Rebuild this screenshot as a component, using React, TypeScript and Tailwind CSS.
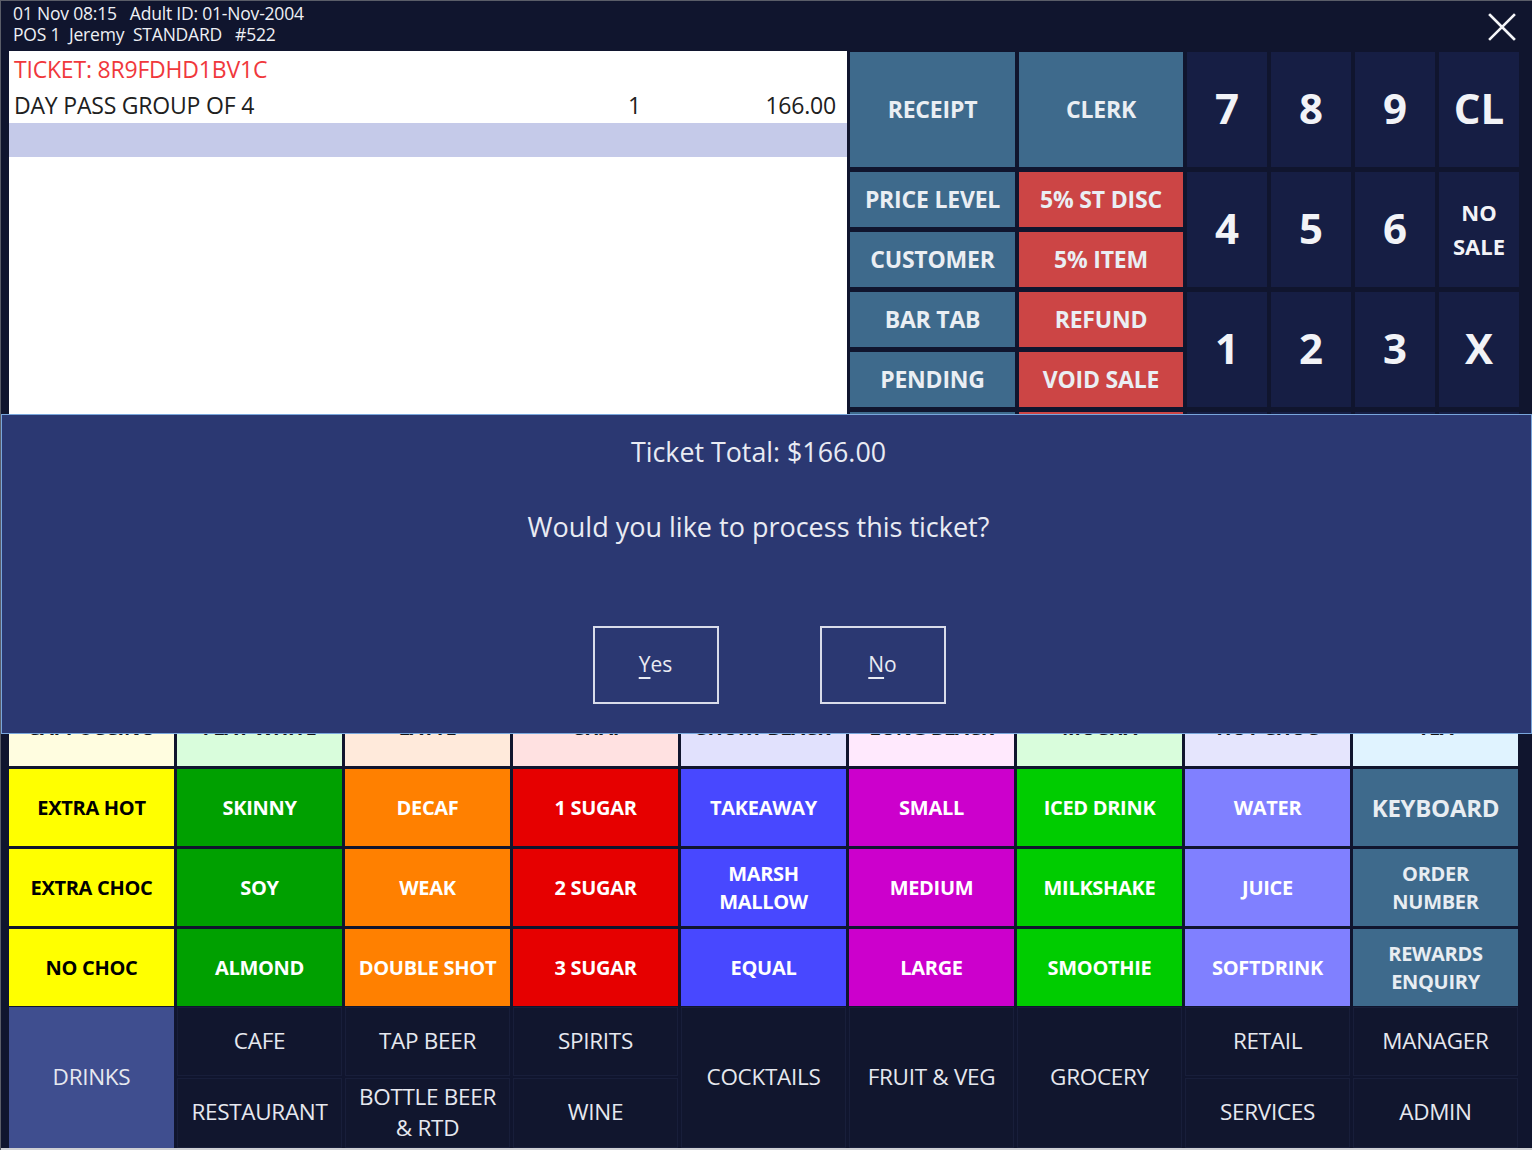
import React from 'react';

type Cell = { label: string; bg: string; fg?: string };

const font = { fontFamily: '"Open Sans", "Noto Sans", "DejaVu Sans", sans-serif' };

const sideKeys: Cell[] = [
  { label: 'PRICE LEVEL', bg: 'bg-[#3e6a8c]' },
  { label: '5% ST DISC', bg: 'bg-[#cc4545]' },
  { label: 'CUSTOMER', bg: 'bg-[#3e6a8c]' },
  { label: '5% ITEM', bg: 'bg-[#cc4545]' },
  { label: 'BAR TAB', bg: 'bg-[#3e6a8c]' },
  { label: 'REFUND', bg: 'bg-[#cc4545]' },
  { label: 'PENDING', bg: 'bg-[#3e6a8c]' },
  { label: 'VOID SALE', bg: 'bg-[#cc4545]' },
  { label: '', bg: 'bg-[#3e6a8c]' },
  { label: '', bg: 'bg-[#cc4545]' },
  { label: '', bg: 'bg-[#3e6a8c]' },
  { label: '', bg: 'bg-[#cc4545]' },
];

const numKeys = ['7', '8', '9', 'CL', '4', '5', '6', 'NO SALE', '1', '2', '3', 'X', '0', '00', '.', ''];

const coffees: Cell[] = [
  { label: 'CAPPUCCINO', bg: 'bg-[#fffde0]' },
  { label: 'FLAT WHITE', bg: 'bg-[#d9fddc]' },
  { label: 'LATTE', bg: 'bg-[#ffeadb]' },
  { label: 'CHAI', bg: 'bg-[#ffe1e1]' },
  { label: 'SHORT BLACK', bg: 'bg-[#e1e1fd]' },
  { label: 'LONG BLACK', bg: 'bg-[#ffe9fd]' },
  { label: 'MOCHA', bg: 'bg-[#d9fddc]' },
  { label: 'HOT CHOC', bg: 'bg-[#e5e5fd]' },
  { label: 'TEA', bg: 'bg-[#e0f3ff]' },
];

const STEEL = 'bg-[#3e6a8c]';

const modifiers: Cell[] = [
  { label: 'EXTRA HOT', bg: 'bg-[#ffff00]', fg: 'text-black' },
  { label: 'SKINNY', bg: 'bg-[#00a000]' },
  { label: 'DECAF', bg: 'bg-[#ff8000]' },
  { label: '1 SUGAR', bg: 'bg-[#e60000]' },
  { label: 'TAKEAWAY', bg: 'bg-[#4848ff]' },
  { label: 'SMALL', bg: 'bg-[#cc00cc]' },
  { label: 'ICED DRINK', bg: 'bg-[#00cc00]' },
  { label: 'WATER', bg: 'bg-[#8080ff]' },
  { label: 'KEYBOARD', bg: STEEL },
  { label: 'EXTRA CHOC', bg: 'bg-[#ffff00]', fg: 'text-black' },
  { label: 'SOY', bg: 'bg-[#00a000]' },
  { label: 'WEAK', bg: 'bg-[#ff8000]' },
  { label: '2 SUGAR', bg: 'bg-[#e60000]' },
  { label: 'MARSH|MALLOW', bg: 'bg-[#4848ff]' },
  { label: 'MEDIUM', bg: 'bg-[#cc00cc]' },
  { label: 'MILKSHAKE', bg: 'bg-[#00cc00]' },
  { label: 'JUICE', bg: 'bg-[#8080ff]' },
  { label: 'ORDER|NUMBER', bg: STEEL },
  { label: 'NO CHOC', bg: 'bg-[#ffff00]', fg: 'text-black' },
  { label: 'ALMOND', bg: 'bg-[#00a000]' },
  { label: 'DOUBLE SHOT', bg: 'bg-[#ff8000]' },
  { label: '3 SUGAR', bg: 'bg-[#e60000]' },
  { label: 'EQUAL', bg: 'bg-[#4848ff]' },
  { label: 'LARGE', bg: 'bg-[#cc00cc]' },
  { label: 'SMOOTHIE', bg: 'bg-[#00cc00]' },
  { label: 'SOFTDRINK', bg: 'bg-[#8080ff]' },
  { label: 'REWARDS|ENQUIRY', bg: STEEL },
];

// "|" marks a forced line break in a key label
function lines(label: string) {
  const parts = label.split('|');
  return parts.map((p, i) => (
    <React.Fragment key={i}>
      {i > 0 && <br />}
      {p}
    </React.Fragment>
  ));
}

function NavKey({
  label,
  bg = 'bg-[#11162e] border border-[#181e3a]',
  className = '',
}: {
  label: string;
  bg?: string;
  className?: string;
}) {
  return (
    <div
      className={`flex items-center justify-center text-center pb-[3px] text-[#e6e8ef] text-[22.5px] leading-[31px] tracking-[-0.3px] ${bg} ${className}`}
    >
      <span>{lines(label)}</span>
    </div>
  );
}

export default function App() {
  return (
    <div
      style={font}
      className="relative w-[1532px] h-[1150px] overflow-hidden bg-[#10152e] border-t border-l border-[#5a5d68] select-none"
    >
      {/* title bar */}
      <div className="h-[50px] flex items-start justify-between pl-[12px] pr-[16px] pt-[2px] text-[#eef0f5] text-[17.5px] leading-[21px] tracking-[-0.2px]">
        <div>
          <div className="whitespace-pre">01 Nov 08:15   Adult ID: 01-Nov-2004</div>
          <div className="whitespace-pre">POS 1  Jeremy  STANDARD   #522</div>
        </div>
        <svg width="28" height="28" viewBox="0 0 28 28" className="mt-[10px]">
          <path d="M2 2 L26 26 M26 2 L2 26" stroke="#f4f5f8" strokeWidth="2.6" strokeLinecap="square" />
        </svg>
      </div>

      {/* ticket + function keys + keypad */}
      <div className="flex pl-[8px]">
        <div className="w-[838px] h-[476px] bg-white flex flex-col">
          <div className="h-[36px] pl-[5px] pt-[3px] text-[#f0383c] text-[23px] leading-[30px] tracking-[-0.2px]">
            TICKET: 8R9FDHD1BV1C
          </div>
          <div className="h-[36px] flex items-center pl-[5px] pr-[11px] text-[#202020] text-[23px] tracking-[-0.2px]">
            <span className="flex-1">DAY PASS GROUP OF 4</span>
            <span className="w-[20px] text-left">1</span>
            <span className="w-[188px] text-right">166.00</span>
          </div>
          <div className="h-[34px] bg-[#c5cae9]" />
        </div>

        <div className="ml-[3px] mt-[1px] grid grid-cols-[165px_164px] grid-rows-[115px_repeat(6,55px)] gap-x-[4px] gap-y-[5px] font-bold text-[#eaeef3] text-[23px] tracking-[-0.2px]">
          <div className="bg-[#3e6a8c] flex items-center justify-center">RECEIPT</div>
          <div className="bg-[#3e6a8c] flex items-center justify-center">CLERK</div>
          {sideKeys.map((k, i) => (
            <div key={i} className={`${k.bg} flex items-center justify-center`}>
              {k.label}
            </div>
          ))}
        </div>

        <div className="ml-[4px] mt-[1px] grid grid-cols-[repeat(4,80px)] grid-rows-[repeat(4,115px)] gap-x-[4px] gap-y-[5px] text-[#f2f3f7] font-bold">
          {numKeys.map((k, i) => (
            <div
              key={i}
              className={`bg-[#161e44] flex items-center justify-center text-center ${
                k === 'NO SALE' ? 'text-[22px] leading-[34px] pb-[2px]' : 'text-[42px] pb-[4px]'
              }`}
            >
              {k === 'NO SALE' ? <span>{lines('NO|SALE')}</span> : k}
            </div>
          ))}
        </div>
      </div>

      {/* product buttons */}
      <div className="mt-[2px] ml-[8px] grid grid-cols-[repeat(9,165px)] grid-rows-[repeat(6,77px)] gap-[3px] font-bold text-[20px] leading-[28px] tracking-[-0.3px]">
        {Array.from({ length: 18 }).map((_, i) => (
          <div key={`e${i}`} className="bg-[#161e44]" />
        ))}
        {coffees.map((c) => (
          <div key={c.label} className={`${c.bg} text-[#141414] flex items-center justify-center`}>
            {c.label}
          </div>
        ))}
        {modifiers.map((c) => (
          <div
            key={c.label}
            className={`${c.bg} flex items-center justify-center text-center whitespace-nowrap ${
              c.fg ?? (c.bg === STEEL ? 'text-[#e8edf2]' : 'text-white')
            } ${c.label === 'KEYBOARD' ? 'text-[24px]' : ''}`}
          >
            <span>{lines(c.label)}</span>
          </div>
        ))}
      </div>

      {/* department tabs */}
      <div className="mt-[1px] ml-[8px] grid grid-cols-[repeat(9,165px)] grid-rows-[69px_70px] gap-x-[3px] gap-y-[2px]">
        <NavKey label="DRINKS" bg="bg-[#3f4e8f]" className="row-span-2" />
        <NavKey label="CAFE" />
        <NavKey label="TAP BEER" />
        <NavKey label="SPIRITS" />
        <NavKey label="COCKTAILS" className="row-span-2" />
        <NavKey label="FRUIT & VEG" className="row-span-2" />
        <NavKey label="GROCERY" className="row-span-2" />
        <NavKey label="RETAIL" />
        <NavKey label="MANAGER" />
        <NavKey label="RESTAURANT" />
        <NavKey label="BOTTLE BEER|& RTD" />
        <NavKey label="WINE" />
        <NavKey label="SERVICES" />
        <NavKey label="ADMIN" />
      </div>
      <div className="absolute left-0 right-0 bottom-0 h-[2px] bg-[#cfd0d4]" />

      {/* confirm dialog */}
      <div className="absolute left-0 right-0 top-[413px] h-[320px] bg-[#2b3872] border border-[#79a6dc] flex flex-col items-center text-[#e9ebf3]">
        <div className="mt-[19px] mr-[16px] text-[26.8px] leading-[36px]">Ticket Total: $166.00</div>
        <div className="mt-[39px] mr-[16px] text-[27px] leading-[36px]">Would you like to process this ticket?</div>
        <div className="mt-[81px] ml-[5px] flex gap-[101px] text-[21px]">
          <button className="w-[126px] h-[78px] border-2 border-[#d9dcea] text-[#e9ebf3]">
            <span className="underline underline-offset-[5px] decoration-[1.5px]">Y</span>es
          </button>
          <button className="w-[126px] h-[78px] border-2 border-[#d9dcea] text-[#e9ebf3]">
            <span className="underline underline-offset-[5px] decoration-[1.5px]">N</span>o
          </button>
        </div>
      </div>
    </div>
  );
}
